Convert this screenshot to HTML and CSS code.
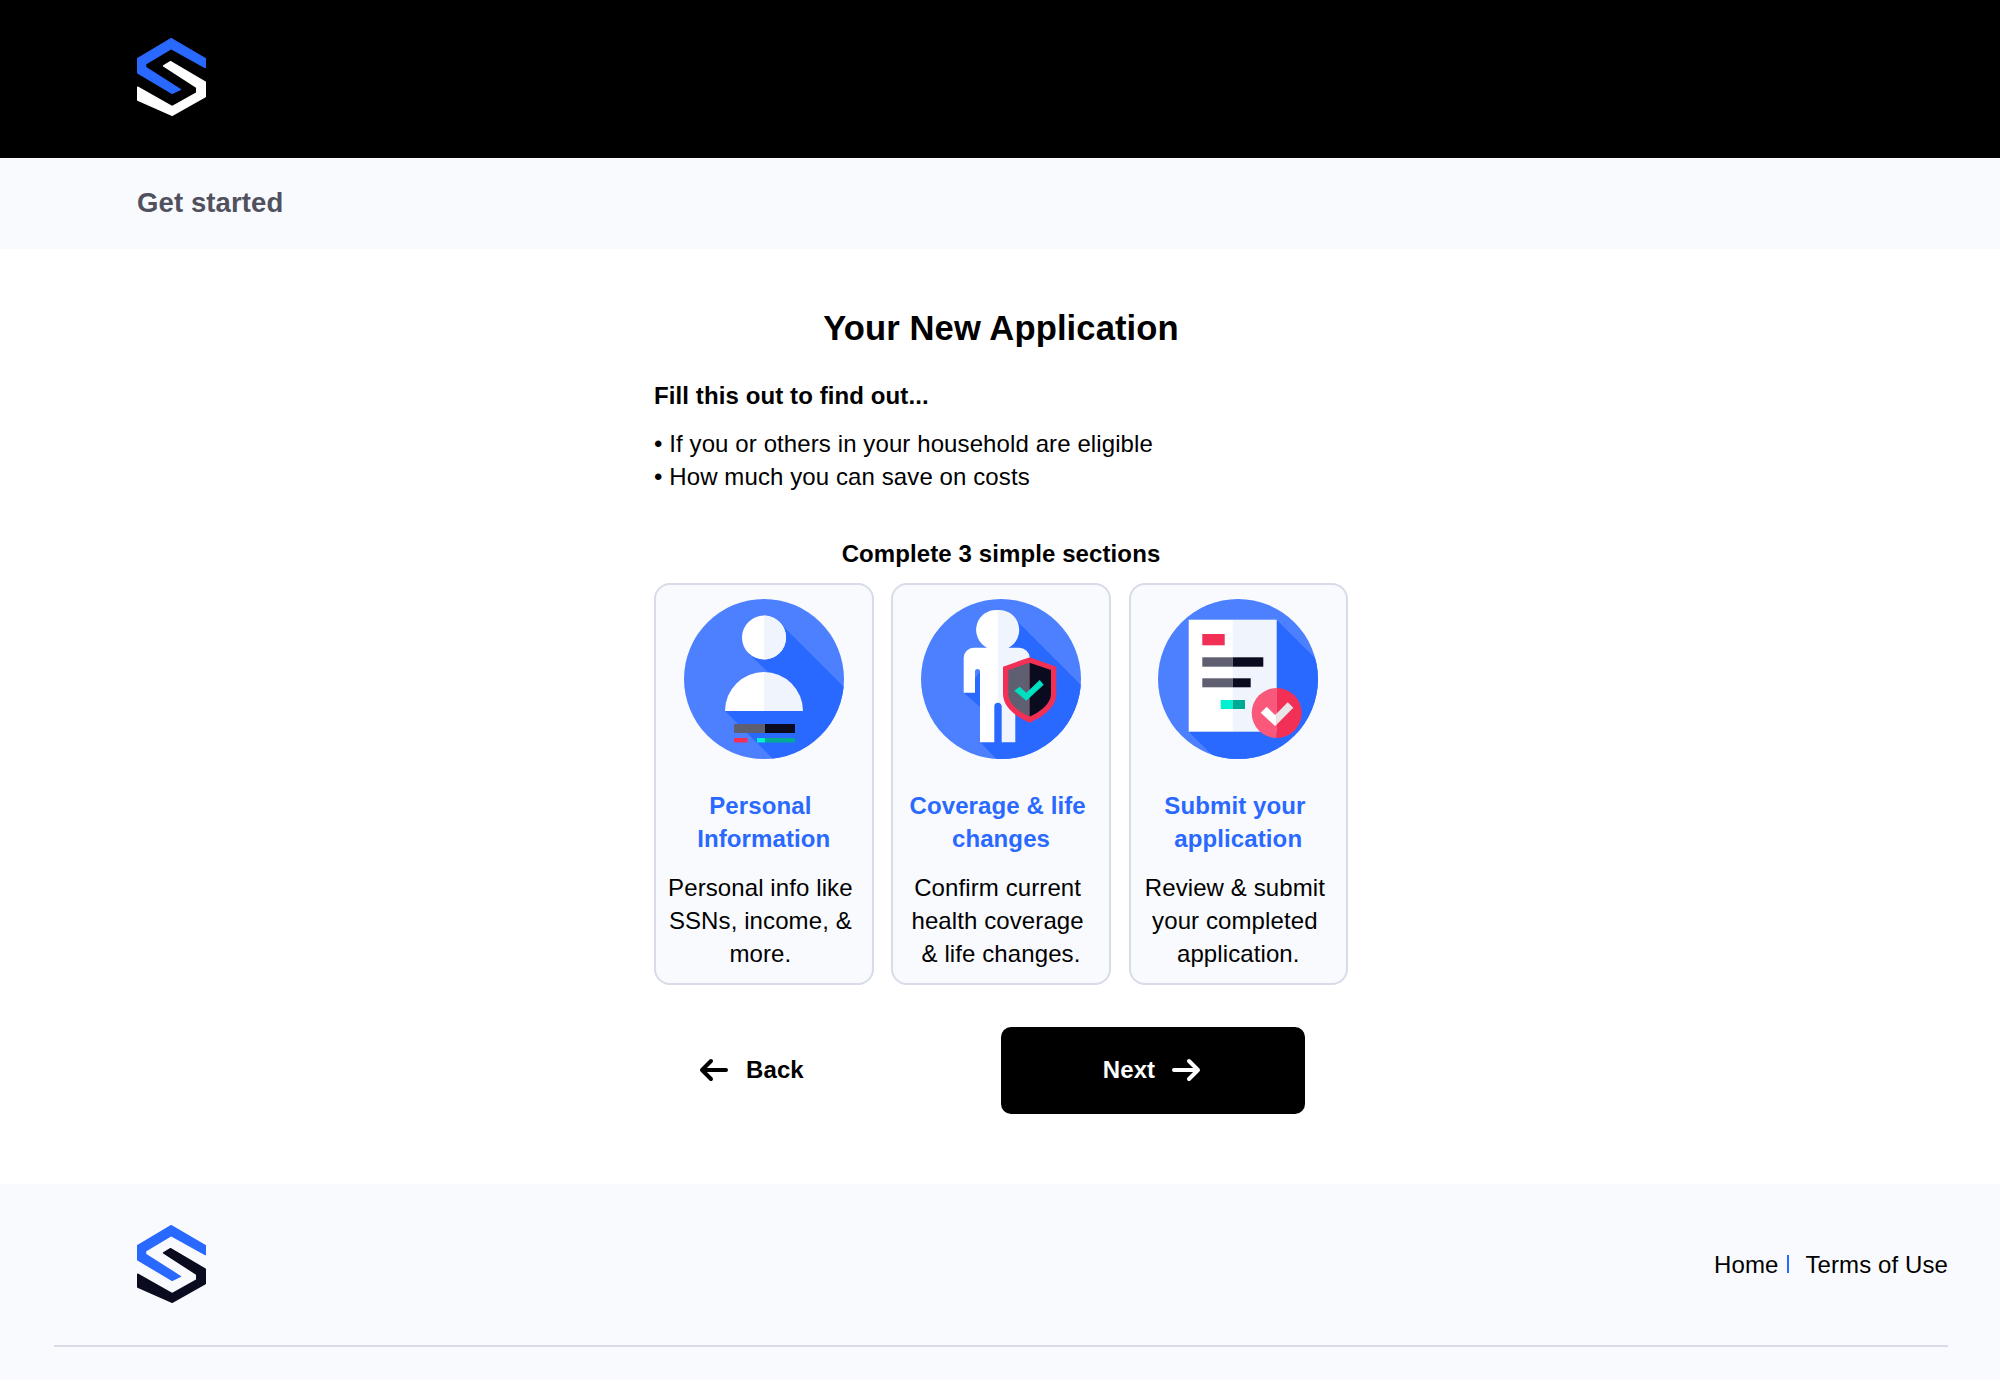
FILE: index.html
```html
<!DOCTYPE html>
<html lang="en">
<head>
<meta charset="utf-8">
<title>Your New Application</title>
<link rel="stylesheet" href="styles.css">
</head>
<body>
<header class="topbar">
  <svg class="logo" viewBox="0 0 208 235" aria-label="Logo">
    <path fill="#2a69ff" stroke="#2a69ff" stroke-width="4" stroke-linejoin="round" d="M103 2L206 62V89L103 32L26 78V88L131 155L106 167L2 105V62Z"/>
    <path fill="#fff" stroke="#fff" stroke-width="4" stroke-linejoin="round" d="M80 84L101 71L206 133V177L106 233L2 187V148L106 207L180 165V149Z"/>
  </svg>
</header>
<div class="subbar"><span class="subbar-title">Get started</span></div>
<main class="content">
  <h1 class="title">Your New Application</h1>
  <p class="lead">Fill this out to find out...</p>
  <ul class="bullets">
    <li>• If you or others in your household are eligible</li>
    <li>• How much you can save on costs</li>
  </ul>
  <h2 class="sections-title">Complete 3 simple sections</h2>
  <div class="cards">
    <section class="card">
      <svg class="card-icon" viewBox="0 0 160 160">
        <defs><clipPath id="c1"><circle cx="80" cy="80" r="80"/></clipPath></defs>
        <circle cx="80" cy="80" r="80" fill="#4d80ff"/>
        <polygon clip-path="url(#c1)" fill="#2a69ff" points="100,28 175,103 175,175 104,175 41,112 80,100 85,74 64,54"/>
        <circle cx="80" cy="38.5" r="22" fill="#fff"/>
        <path fill="#f0f4fc" d="M80 16.500A22 22 0 0 1 80 60.500Z"/>
        <path fill="#fff" d="M41 112A39 39 0 0 1 80 73V112Z"/>
        <path fill="#f0f4fc" d="M80 73A39 39 0 0 1 119 112H80Z"/>
        <rect x="50" y="125" width="31" height="9" fill="#5f5f72"/>
        <rect x="81" y="125" width="30" height="9" fill="#0a0b1e"/>
        <rect x="50" y="139" width="13.500" height="4.500" fill="#f23056"/>
        <rect x="73" y="139" width="8" height="4.500" fill="#00f0d0"/>
        <rect x="81" y="139" width="30" height="4.500" fill="#00ab96"/>
      </svg>
      <h3 class="card-title">Personal&nbsp;<br>Information</h3>
      <p class="card-text">Personal info like&nbsp;<br>SSNs, income, &amp;&nbsp;<br>more.&nbsp;</p>
    </section>
    <section class="card">
      <svg class="card-icon" viewBox="0 0 160 160">
        <defs><clipPath id="c2"><circle cx="80" cy="80" r="80"/></clipPath></defs>
        <circle cx="80" cy="80" r="80" fill="#4d80ff"/>
        <polygon clip-path="url(#c2)" fill="#2a69ff" points="95,21 175,101 175,175 90,175 59,143 59,108 42.700,93.700 77,50"/>
        <path fill="#fff" d="M77 11A20 20 0 0 0 66 48.700H52.700A10 10 0 0 0 42.700 58.700V93.700H54V72.500A2.500 2.500 0 0 1 59 72.500V143.300H73.300V107.400A3.700 3.700 0 0 1 77 103.700Z"/>
        <path fill="#f0f4fc" d="M76.700 11A20 20 0 0 1 87.400 48.700H98A11 11 0 0 1 109 59V90H94.300V143.300H80.700V107.400A3.700 3.700 0 0 0 76.700 103.700Z"/>
        <path fill="#f23056" d="M108.700 58.300L135.300 67.700V95C135.300 108 122 118 108.700 123.700C95 118 82 108 82 95V67.700Z"/>
        <path fill="#5f5f72" d="M108.700 63.700L87.300 71V95C87.300 105 98 113 108.700 117.500Z"/>
        <path fill="#0a0b1e" d="M108.700 63.700L130 71V95C130 105 119 113 108.700 117.500Z"/>
        <polygon fill="#00dfc0" points="93.300,91.700 98.700,87.700 105.300,93.700 118.700,81 122.700,85.700 105.300,101.700"/>
      </svg>
      <h3 class="card-title">Coverage &amp; life&nbsp;<br>changes</h3>
      <p class="card-text">Confirm current&nbsp;<br>health coverage&nbsp;<br>&amp; life changes.</p>
    </section>
    <section class="card">
      <svg class="card-icon" viewBox="0 0 160 160">
        <defs><clipPath id="c3"><circle cx="80" cy="80" r="80"/></clipPath></defs>
        <circle cx="80" cy="80" r="80" fill="#4d80ff"/>
        <polygon clip-path="url(#c3)" fill="#2a69ff" points="118.700,20.700 165,67 175,175 73,175 30.700,132.700"/>
        <rect x="30.700" y="20.700" width="44.500" height="112" fill="#fff"/>
        <rect x="74.700" y="20.700" width="44" height="112" fill="#f0f4fc"/>
        <rect x="44.300" y="35" width="22.400" height="11.300" fill="#f23056"/>
        <rect x="44.300" y="58.300" width="30.400" height="9.400" fill="#5f5f72"/>
        <rect x="74.700" y="58.300" width="30.600" height="9.400" fill="#0a0b1e"/>
        <rect x="44.300" y="79.300" width="30.400" height="9" fill="#5f5f72"/>
        <rect x="74.700" y="79.300" width="18" height="9" fill="#0a0b1e"/>
        <rect x="62.700" y="101" width="12" height="9" fill="#00f0d0"/>
        <rect x="74.700" y="101" width="12.300" height="9" fill="#00ab96"/>
        <path fill="#f9587a" d="M118.700 89A25 25 0 0 0 118.700 139Z"/>
        <path fill="#f23056" d="M118.700 89A25 25 0 0 1 118.700 139Z"/>
        <polygon fill="#fff" points="102.700,113.700 108.700,107.700 117,116 118.700,114.500 118.700,125.500 117,127"/>
        <polygon fill="#e6e6e6" points="118.700,114.500 129.700,103.300 135.300,108.700 118.700,125.500"/>
      </svg>
      <h3 class="card-title">Submit your&nbsp;<br>application</h3>
      <p class="card-text">Review &amp; submit&nbsp;<br>your completed&nbsp;<br>application.</p>
    </section>
  </div>
  <div class="actions">
    <a class="btn-back" href="#">
      <svg class="arrow" viewBox="0 0 30 24"><path d="M27 12H4M12 3L3 12L12 21"/></svg>
      <span>Back</span>
    </a>
    <a class="btn-next" href="#">
      <span>Next</span>
      <svg class="arrow" viewBox="0 0 30 24"><path d="M3 12H26M18 3L27 12L18 21"/></svg>
    </a>
  </div>
</main>
<footer class="footer">
  <div class="footer-row">
    <svg class="logo" viewBox="0 0 208 235" aria-label="Logo">
      <path fill="#2a69ff" stroke="#2a69ff" stroke-width="4" stroke-linejoin="round" d="M103 2L206 62V89L103 32L26 78V88L131 155L106 167L2 105V62Z"/>
      <path fill="#0a0b1e" stroke="#0a0b1e" stroke-width="4" stroke-linejoin="round" d="M80 84L101 71L206 133V177L106 233L2 187V148L106 207L180 165V149Z"/>
    </svg>
    <nav class="footer-nav">
      <a href="#">Home</a>
      <span class="sep"></span>
      <a href="#">Terms of Use</a>
    </nav>
  </div>
  <div class="footer-rule"></div>
</footer>
</body>
</html>
```
FILE: styles.css
```css
* { box-sizing: border-box; }
html, body { margin: 0; padding: 0; }
body {
  width: 2000px;
  height: 1380px;
  overflow: hidden;
  background: #fff;
  color: #000;
  font-family: "Liberation Sans", Arial, sans-serif;
  font-size: 24px;
  line-height: 33px;
  letter-spacing: 0.1px;
  display: flex;
  flex-direction: column;
}
.topbar {
  height: 158px;
  background: #000;
  padding: 38px 0 0 137px;
}
.logo { display: block; width: 69px; height: 78px; }
.subbar {
  height: 91px;
  background: #f9fafe;
  padding: 0 0 2px 137px;
  display: flex;
  align-items: center;
}
.subbar-title { font-size: 27.5px; font-weight: 700; color: #50505e; }
.content {
  flex: 1;
  width: 694px;
  margin: 0 0 0 654px;
}
.title {
  margin: 56px 0 0;
  font-size: 34.6px;
  line-height: 46px;
  font-weight: 700;
  text-align: center;
}
.lead { margin: 28px 0 0; font-weight: 700; }
.bullets { list-style: none; margin: 15px 0 0; padding: 0; }
.sections-title {
  margin: 44px 0 0;
  font-size: 24px;
  line-height: 33px;
  font-weight: 700;
  text-align: center;
}
.cards {
  margin-top: 13px;
  display: grid;
  grid-template-columns: repeat(3, 219.5px);
  justify-content: space-between;
}
.card {
  height: 402px;
  padding: 14px 0 0;
  background: #f9fafe;
  border: 2px solid #d8dce8;
  border-radius: 16px;
  text-align: center;
}
.card-icon { display: block; width: 160px; height: 160px; margin: 0 auto; }
.card-title {
  margin: 30px 0 0;
  font-size: 24px;
  line-height: 33px;
  font-weight: 700;
  color: #2a69ff;
}
.card-text { margin: 16px 0 0; }
.actions { margin-top: 42px; display: flex; }
.btn-back {
  width: 347px;
  height: 87px;
  padding: 0 0 2px 45px;
  display: flex;
  align-items: center;
  gap: 17px;
  color: #000;
  font-weight: 700;
  text-decoration: none;
}
.btn-next {
  width: 304px;
  height: 87px;
  padding: 0 2px 2px 0;
  border-radius: 10px;
  background: #000;
  color: #fff;
  font-weight: 700;
  text-decoration: none;
  display: flex;
  align-items: center;
  justify-content: center;
  gap: 16px;
}
.arrow {
  width: 30px;
  height: 24px;
  fill: none;
  stroke: currentColor;
  stroke-width: 4;
  stroke-linecap: round;
  stroke-linejoin: round;
}
.footer {
  height: 196px;
  background: #f9fafe;
  padding: 41px 52px 0 137px;
}
.footer-row {
  display: flex;
  justify-content: space-between;
  align-items: center;
}
.footer-nav { display: flex; align-items: center; }
.footer-nav a { color: #000; text-decoration: none; }
.sep {
  width: 2px;
  height: 18px;
  margin: 0 16px 0 9px;
  background: #2a69ff;
}
.footer-rule {
  height: 2px;
  margin: 42px 0 0 -83px;
  background: #d8dce8;
}
```
